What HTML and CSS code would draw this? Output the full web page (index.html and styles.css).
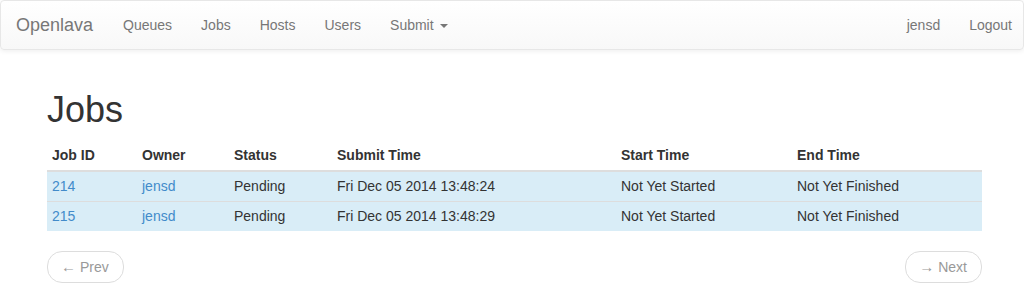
FILE: index.html
```html
<!DOCTYPE html>
<html lang="en">
<head>
    <meta charset="UTF-8">
    <title>Openlava - Jobs</title>
    <link rel="stylesheet" href="styles.css">
</head>
<body>
<nav class="navbar">
    <a class="brand" href="#">Openlava</a>
    <ul class="nav">
        <li><a href="#">Queues</a></li>
        <li><a href="#">Jobs</a></li>
        <li><a href="#">Hosts</a></li>
        <li><a href="#">Users</a></li>
        <li><a href="#">Submit <span class="caret"></span></a></li>
    </ul>
    <ul class="nav nav-right">
        <li><a href="#">jensd</a></li>
        <li><a href="#">Logout</a></li>
    </ul>
</nav>

<div class="container">
    <h1>Jobs</h1>
    <table class="jobs">
        <thead>
            <tr>
                <th class="col-id">Job ID</th>
                <th class="col-owner">Owner</th>
                <th class="col-status">Status</th>
                <th class="col-submit">Submit Time</th>
                <th class="col-start">Start Time</th>
                <th>End Time</th>
            </tr>
        </thead>
        <tbody>
            <tr>
                <td><a href="#">214</a></td>
                <td><a href="#">jensd</a></td>
                <td>Pending</td>
                <td>Fri Dec 05 2014 13:48:24</td>
                <td>Not Yet Started</td>
                <td>Not Yet Finished</td>
            </tr>
            <tr>
                <td><a href="#">215</a></td>
                <td><a href="#">jensd</a></td>
                <td>Pending</td>
                <td>Fri Dec 05 2014 13:48:29</td>
                <td>Not Yet Started</td>
                <td>Not Yet Finished</td>
            </tr>
        </tbody>
    </table>

    <ul class="pager">
        <li><a href="#"><span class="arrow">&larr;</span> Prev</a></li>
        <li><a href="#"><span class="arrow">&rarr;</span> Next</a></li>
    </ul>
</div>
</body>
</html>
```

FILE: styles.css
```css
* {
    box-sizing: border-box;
}

body {
    margin: 0;
    font-family: "Liberation Sans", Arial, sans-serif;
    font-size: 14px;
    line-height: 20px;
    color: #333;
    background-color: #fff;
}

a {
    color: #428bca;
    text-decoration: none;
}

/* navbar */
.navbar {
    display: flex;
    height: 50px;
    margin-bottom: 20px;
    background-image: linear-gradient(to bottom, #fff 0%, #f8f8f8 100%);
    border: 1px solid #e7e7e7;
    border-radius: 4px;
    box-shadow: inset 0 1px 0 rgba(255, 255, 255, 0.15), 0 1px 5px rgba(0, 0, 0, 0.075);
}

.brand {
    padding: 14px 15px;
    font-size: 18px;
    line-height: 20px;
    color: #777;
    text-shadow: 0 1px 0 rgba(255, 255, 255, 0.25);
}

.nav {
    display: flex;
    margin: 0;
    padding: 0;
    list-style: none;
}

.nav a {
    display: block;
    padding: 14px 14px 14px 15px;
    color: #777;
    text-shadow: 0 1px 0 rgba(255, 255, 255, 0.25);
}

.nav-right {
    margin-left: auto;
    margin-right: -3px;
}

.caret {
    display: inline-block;
    width: 0;
    height: 0;
    margin-left: 2px;
    vertical-align: middle;
    border-top: 4px solid #777;
    border-left: 4px solid transparent;
    border-right: 4px solid transparent;
}

/* content */
.container {
    width: 935px;
    margin-left: 47px;
    padding-top: 20px;
}

h1 {
    margin: 0 0 10px;
    font-size: 36px;
    font-weight: 500;
    line-height: 1.1;
}

.jobs {
    width: 100%;
    border-collapse: collapse;
    border-spacing: 0;
}

.jobs th,
.jobs td {
    padding: 5px;
    line-height: 20px;
    text-align: left;
    vertical-align: top;
}

.jobs th {
    font-weight: bold;
    border-bottom: 2px solid #ddd;
}

.jobs td {
    padding-top: 4px;
    border-top: 1px solid #ddd;
    background-color: #d9edf7;
}

.col-id { width: 90px; }
.col-owner { width: 92px; }
.col-status { width: 103px; }
.col-submit { width: 284px; }
.col-start { width: 176px; }

/* pager */
.pager {
    display: flex;
    justify-content: space-between;
    margin: 20px 0;
    padding: 0;
    list-style: none;
}

.pager a {
    display: inline-block;
    padding: 5px 14px 5px 13px;
    color: #999;
    background-color: #fff;
    border: 1px solid #ddd;
    border-radius: 15px;
}

.arrow {
    font-size: 15px;
    line-height: 1;
}
```
